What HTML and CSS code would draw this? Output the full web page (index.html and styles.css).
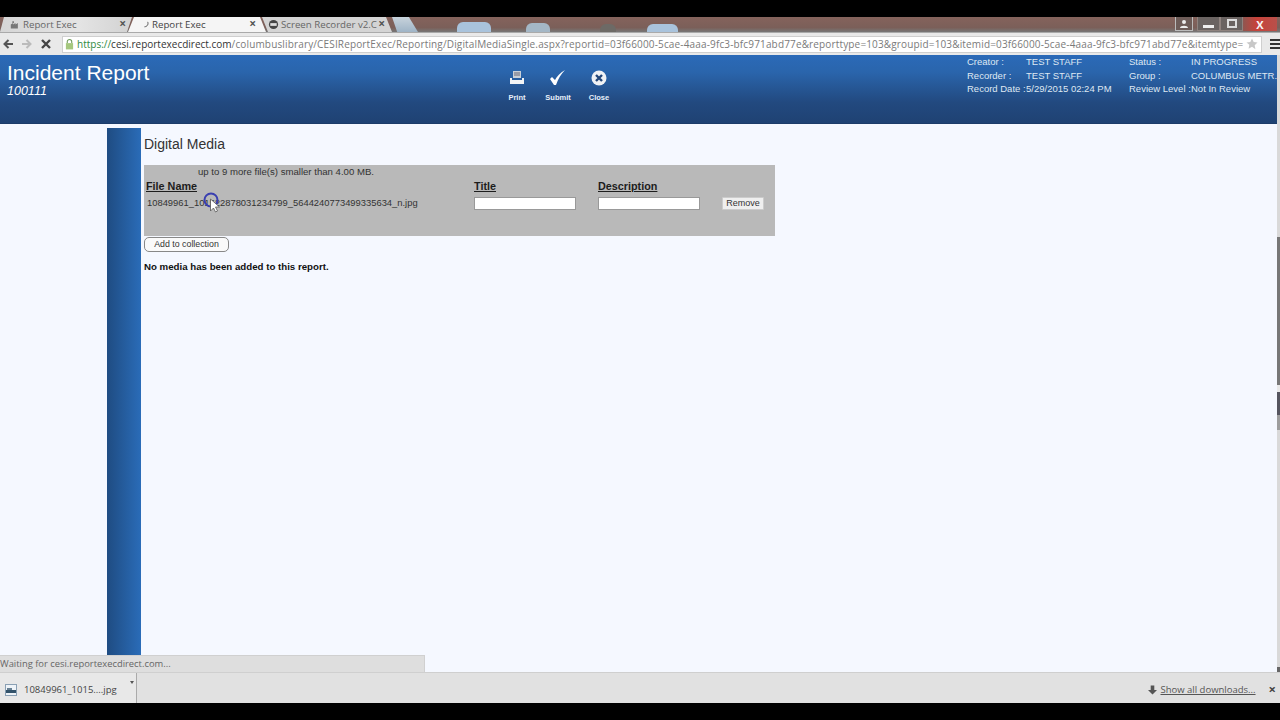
FILE: index.html
```html
<!DOCTYPE html>
<html lang="en">
<head>
<meta charset="utf-8">
<title>Report Exec</title>
<link rel="stylesheet" href="styles.css">
</head>
<body>
<div class="letterbox"></div>
<div class="tabstrip">
  <div class="tab tab-one">
    <svg class="tab-icon" viewBox="0 0 14 12"><path d="M1 11V6l3-2v2l3-2v2l3-2v7zM3 2h2v2H3z" fill="#777"/></svg>
    <span class="tab-title">Report Exec</span><span class="tab-x">×</span>
  </div>
  <div class="tab tab-two">
    <svg class="tab-icon spin" viewBox="0 0 12 12"><path d="M8 1.5C9.5 5 8 9.5 2.5 10" fill="none" stroke="#444" stroke-width="1.5"/></svg>
    <span class="tab-title">Report Exec</span><span class="tab-x">×</span>
  </div>
  <div class="tab tab-three">
    <svg class="tab-icon" viewBox="0 0 12 12"><circle cx="6" cy="6" r="5" fill="#444"/><rect x="2.5" y="4.5" width="7" height="3" fill="#ddd"/></svg>
    <span class="tab-title">Screen Recorder v2.C</span><span class="tab-x">×</span>
  </div>
  <div class="tab-stub"></div>
  <div class="desktop-blobs">
    <span class="blob blob-a"></span><span class="blob blob-b"></span><span class="blob blob-c"></span><span class="blob blob-d"></span>
  </div>
  <div class="window-controls">
    <span class="win-btn win-user"><svg viewBox="0 0 12 10" width="12" height="10"><path d="M6 1a2 2 0 1 1 0 4 2 2 0 0 1 0-4zM2 9c0-3 8-3 8 0z" fill="#eee"/></svg></span>
    <span class="win-btn win-min"><span class="min-bar"></span></span>
    <span class="win-btn win-max"><span class="max-box"></span></span>
    <span class="win-btn win-close">X</span>
  </div>
</div>
<div class="toolbar">
  <svg class="nav-icon" viewBox="0 0 12 12"><path d="M11 6H3M6.5 2L2.5 6l4 4" fill="none" stroke="#555" stroke-width="2"/></svg>
  <svg class="nav-icon" viewBox="0 0 12 12"><path d="M1 6h8M5.5 2l4 4-4 4" fill="none" stroke="#bbb" stroke-width="2"/></svg>
  <svg class="nav-icon" viewBox="0 0 12 12"><path d="M2 2l8 8M10 2l-8 8" fill="none" stroke="#444" stroke-width="2.4"/></svg>
  <div class="omnibox">
    <svg class="lock" viewBox="0 0 10 12"><path d="M2.5 5V3.500a2.500 2.500 0 0 1 5 0V5" fill="none" stroke="#6f9a5c" stroke-width="1.200"/><rect x="1" y="5" width="8" height="7" fill="#a5c77e"/></svg>
    <div class="url"><span class="url-scheme">https://</span><span class="url-host">cesi.reportexecdirect.com</span>/columbuslibrary/CESIReportExec/Reporting/DigitalMediaSingle.aspx?reportid=03f66000-5cae-4aaa-9fc3-bfc971abd77e&amp;reporttype=103&amp;groupid=103&amp;itemid=03f66000-5cae-4aaa-9fc3-bfc971abd77e&amp;itemtype=</div>
    <svg class="star" viewBox="0 0 12 12"><path d="M6 .5l1.700 3.600 3.800.5-2.800 2.700.7 3.900L6 8.800l-3.400 1.900.7-3.900L.5 4.600l3.800-.5z" fill="#c8c8c8"/></svg>
  </div>
  <div class="menu-bars"><span></span><span></span><span></span></div>
</div>
<div class="viewport">
  <div class="page">
    <header class="report-header">
      <div class="report-title">
        <h1>Incident Report</h1>
        <div class="report-number">100111</div>
      </div>
      <nav class="actions">
        <div class="action">
          <svg viewBox="0 0 16 16" width="16" height="16"><path d="M4 1h8v7H4z" fill="#c9d0d8"/><path d="M5 3h6M5 5h6" stroke="#667" stroke-width="1"/><path d="M1 8h2v2h10V8h2v6H1z" fill="#f2f4f6"/></svg>
          <span>Print</span>
        </div>
        <div class="action">
          <svg viewBox="0 0 18 16" width="18" height="16"><path d="M1 9l2-2 3 3c2-4 5-7 10-10-4 4-7 9-9 15H5z" fill="#fff"/></svg>
          <span>Submit</span>
        </div>
        <div class="action">
          <svg viewBox="0 0 16 16" width="16" height="16"><circle cx="8" cy="8" r="7.500" fill="#f0f2f5"/><path d="M5 5l6 6M11 5l-6 6" stroke="#24477a" stroke-width="2.400"/></svg>
          <span>Close</span>
        </div>
      </nav>
      <dl class="meta">
        <dt>Creator :</dt><dd>TEST STAFF</dd><dt>Status :</dt><dd>IN PROGRESS</dd>
        <dt>Recorder :</dt><dd>TEST STAFF</dd><dt>Group :</dt><dd>COLUMBUS METR.</dd>
        <dt>Record Date :</dt><dd>5/29/2015 02:24 PM</dd><dt>Review Level :</dt><dd>Not In Review</dd>
      </dl>
    </header>
    <div class="body-row">
      <aside class="side-bar"></aside>
      <main class="content">
        <h2>Digital Media</h2>
        <section class="upload-panel">
          <div class="upload-hint">up to 9 more file(s) smaller than 4.00 MB.</div>
          <div class="upload-grid">
            <div class="col-head">File Name</div>
            <div class="col-head">Title</div>
            <div class="col-head">Description</div>
            <div></div>
            <div class="file-name">10849961_101522878031234799_5644240773499335634_n.jpg</div>
            <input class="field" type="text" aria-label="Title">
            <input class="field" type="text" aria-label="Description">
            <button class="remove-btn" type="button">Remove</button>
          </div>
        </section>
        <button class="add-btn" type="button">Add to collection</button>
        <p class="empty-note">No media has been added to this report.</p>
      </main>
    </div>
    <div class="status-bubble">Waiting for cesi.reportexecdirect.com...</div>
    <svg class="busy-cursor" viewBox="0 0 20 24" width="20" height="24"><circle cx="8" cy="8" r="6.500" fill="none" stroke="#3a3fb0" stroke-width="2"/><path d="M7.500 7v12l3-3 2 4 2-1-2-4h4z" fill="#fff" stroke="#555" stroke-width=".8"/></svg>
  </div>
  <div class="edge-strip">
    <span class="edge-a"></span><span class="edge-b"></span><span class="edge-c"></span><span class="edge-d"></span><span class="edge-e"></span><span class="edge-f"></span>
  </div>
</div>
<footer class="download-bar">
  <div class="download-item">
    <svg class="file-icon" viewBox="0 0 12 12"><rect x=".5" y=".5" width="11" height="11" fill="#eef3f8" stroke="#8aa0b4"/><path d="M1 6h10v3H1z" fill="#33536b"/><path d="M2 4h5v2H2z" fill="#667f92"/></svg>
    <span class="download-name">10849961_1015....jpg</span>
    <span class="caret"></span>
  </div>
  <div class="download-right">
    <svg class="dl-arrow" viewBox="0 0 10 10"><path d="M3 0h4v5h3L5 10 0 5h3z" fill="#555"/></svg>
    <a class="show-all">Show all downloads...</a>
    <span class="bar-close">×</span>
  </div>
</footer>
<div class="letterbox bottom"></div>
</body>
</html>
```

FILE: styles.css
```css
* { box-sizing: border-box; }
html, body { margin: 0; height: 720px; overflow: hidden; }
body {
  display: flex;
  flex-direction: column;
  width: 1280px;
  background: #000;
  font-family: "Liberation Sans", Arial, sans-serif;
}
.letterbox { height: 17px; flex: none; background: #000; }
.letterbox.bottom { flex: 1; }

/* Tab strip */
.tabstrip {
  height: 15px;
  flex: none;
  display: flex;
  position: relative;
  background: linear-gradient(#85635c, #7b5f59 70%, #777);
  font-family: "Open Sans", "Noto Sans", sans-serif;
  font-size: 9.700px;
  overflow: hidden;
}
.tab {
  display: flex;
  align-items: center;
  height: 15px;
  flex: none;
  color: #666;
}
.tab-one {
  width: 132px;
  padding: 0 4px 1px 10px;
  background: linear-gradient(90deg, #d6d6d6, #e4e4e4 60%, #d2d2d2);
  clip-path: polygon(4px 0, 100% 0, calc(100% - 5px) 100%, 0 100%);
}
.tab-two {
  width: 138px;
  margin-left: -4px;
  padding: 0 8px 1px 15px;
  background: #f5f5f5;
  color: #444;
  clip-path: polygon(6px 0, calc(100% - 6px) 0, 100% 100%, 0 100%);
}
.tab-three {
  width: 130px;
  margin-left: -4px;
  padding: 0 5px 1px 6px;
  background: #d4d4d4;
  clip-path: polygon(0 0, calc(100% - 6px) 0, 100% 100%, 6px 100%);
}
.tab-stub {
  width: 26px;
  height: 15px;
  flex: none;
  background: linear-gradient(#c8d3dc, #9fb4c6);
  clip-path: polygon(0 0, 65% 0, 100% 100%, 20% 100%);
}
.tab-icon { width: 11px; height: 11px; flex: none; margin-right: 2px; }
.tab-icon.spin { margin-right: 2px; width: 7px; }
.tab-title { flex: 1; white-space: nowrap; overflow: hidden; }
.tab-x { font-weight: 700; font-size: 12px; line-height: 12px; color: #555; margin-right: 2px; }

.desktop-blobs { position: relative; flex: 1; }
.blob { position: absolute; top: 7px; height: 8px; background: #a9c3dc; border-radius: 6px 6px 0 0; }
.blob-a { left: 39px; width: 34px; top: 5px; height: 10px; }
.blob-b { left: 108px; width: 24px; top: 6px; height: 9px; background: #a4b7c6; }
.blob-c { left: 229px; width: 31px; }
.blob-d { left: 182px; width: 16px; background: #6d6a66; }

.window-controls {
  position: absolute;
  right: 3px;
  top: 0;
  height: 14px;
  display: flex;
  align-items: stretch;
}
.win-btn {
  display: flex;
  align-items: center;
  justify-content: center;
  width: 23px;
  background: #7b6a66;
  border: 1px solid #8e827e;
  border-top: 0;
}
.win-user { width: 18px; margin-right: 4px; background: #6d5c58; border-color: #bbb; }
.win-min { background: #6a6361; }
.win-max { background: #6a6361; }
.min-bar { width: 11px; height: 3px; background: #eee; margin-top: 6px; }
.max-box { width: 10px; height: 9px; border: 2px solid #ddd; }
.win-close {
  width: 34px;
  background: linear-gradient(90deg, #8f5650, #c8423a 40%, #b8504a);
  border: 0;
  color: #f5f5f5;
  font-weight: 700;
  font-size: 11px;
}

/* Address bar */
.toolbar {
  height: 23px;
  flex: none;
  display: flex;
  align-items: center;
  background: #e9e9e9;
  border-top: 1px solid #aaa;
  padding: 0 0 0 2px;
}
.nav-icon { width: 12px; height: 12px; flex: none; margin-right: 7px; }
.nav-icon:nth-child(3) { margin-right: 8px; }
.omnibox {
  width: 1200px;
  height: 17px;
  flex: none;
  display: flex;
  align-items: center;
  margin-left: 2px;
  background: #fff;
  border: 1px solid #cfcfcf;
  padding: 0 3px 0 2px;
  overflow: hidden;
}
.lock { width: 9px; height: 12px; flex: none; margin-right: 3px; }
.url {
  flex: 1;
  min-width: 0;
  overflow: hidden;
  white-space: nowrap;
  padding-bottom: 1px;
  font-family: "Open Sans", "Noto Sans", sans-serif;
  font-size: 10px;
  letter-spacing: .15px;
  color: #7a7a7a;
}
.url-scheme, .url-host { letter-spacing: 0; }
.url-scheme { color: #2f8a40; }
.url-host { color: #333; }
.star { width: 12px; height: 12px; flex: none; margin-left: 3px; }
.menu-bars { display: flex; flex-direction: column; gap: 2px; width: 10px; margin-left: 8px; flex: none; }
.menu-bars span { height: 2px; background: #333; }

/* Page */
.viewport { flex: none; height: 617px; display: flex; }
.page {
  position: relative;
  width: 1277px;
  flex: none;
  display: flex;
  flex-direction: column;
  background: #f5f8ff;
}
.report-header {
  height: 69px;
  flex: none;
  display: flex;
  color: #fff;
  background: linear-gradient(#2b6ab8, #2a65ac 25%, #22497f 70%, #1f4273);
  border-bottom: 1px solid #1c3c69;
}
.report-title { width: 507px; flex: none; padding: 6px 0 0 7px; }
.report-title h1 {
  margin: 0;
  font-size: 21px;
  line-height: 23px;
  font-weight: 400;
  white-space: nowrap;
}
.report-number { font-size: 12.500px; line-height: 14px; font-style: italic; }
.actions { display: flex; flex: none; width: 460px; padding-top: 15px; }
.action {
  display: flex;
  flex-direction: column;
  align-items: center;
  gap: 7px;
  width: 20px;
  margin-right: 21px;
  font-size: 7.500px;
  line-height: 9px;
  font-weight: 700;
  color: #e8f0fa;
}
.action svg { flex: none; }
.meta {
  margin: 0;
  display: grid;
  grid-template-columns: 59px 103px 62px 1fr;
  grid-auto-rows: 13.500px;
  font-size: 9.500px;
  line-height: 13px;
  white-space: nowrap;
  color: #dfe8f3;
  align-content: start;
  flex: 1;
  min-width: 0;
}
.meta dt, .meta dd { margin: 0; }

.body-row { flex: 1; min-height: 0; display: flex; padding: 4px 0 0 107px; }
.side-bar {
  width: 34px;
  flex: none;
  background: linear-gradient(90deg, #1f4c82, #2a6cb8);
}
.content { padding: 0 0 0 3px; flex: 1; min-width: 0; }
.content h2 {
  margin: 0;
  padding-top: 8px;
  height: 37px;
  font-size: 14px;
  line-height: 16px;
  font-weight: 400;
  color: #333;
}
.upload-panel {
  width: 631px;
  height: 71px;
  background: #b9b9b9;
  padding: 1px 0 0 2px;
  color: #222;
}
.upload-hint {
  padding-left: 52px;
  font-size: 9.600px;
  line-height: 12px;
  color: #333;
}
.upload-grid {
  display: grid;
  grid-template-columns: 328px 124px 124px 42px;
  grid-template-rows: 15px 18px;
  margin-top: 1px;
  align-items: center;
}
.col-head {
  font-size: 10.800px;
  line-height: 13px;
  font-weight: 700;
  text-decoration: underline;
  color: #1d1d1d;
}
.file-name { font-size: 9.400px; color: #333; white-space: nowrap; padding: 0 0 2px 1px; }
.field {
  width: 102px;
  height: 13px;
  padding: 0;
  background: #fff;
  border: 1px solid #999;
  border-radius: 0;
}
.remove-btn {
  width: 42px;
  height: 13px;
  padding: 0;
  font: 9px/11px "Liberation Sans", Arial, sans-serif;
  color: #333;
  background: #efefef;
  border: 1px solid #ccc;
  border-radius: 1px;
}
.add-btn {
  display: block;
  width: 85px;
  height: 15px;
  margin-top: 1px;
  padding: 0;
  font: 8.800px/13px "Liberation Sans", Arial, sans-serif;
  color: #333;
  background: #fafafa;
  border: 1px solid #888;
  border-radius: 5px;
}
.empty-note {
  margin: 9px 0 0;
  font-size: 9.700px;
  line-height: 12px;
  font-weight: 700;
  color: #111;
}
.status-bubble {
  position: absolute;
  left: 0;
  bottom: 0;
  width: 425px;
  height: 17px;
  font-family: "Open Sans", "Noto Sans", sans-serif;
  font-size: 9.400px;
  line-height: 15px;
  color: #666;
  background: #dedede;
  border-top: 1px solid #d0d0d0;
  border-right: 1px solid #d0d0d0;
}
.busy-cursor { position: absolute; left: 203px; top: 137px; }

.edge-strip { flex: 1; display: flex; flex-direction: column; background: #d9d9d9; }
.edge-strip span { display: block; }
.edge-a { height: 182px; }
.edge-b { height: 148px; background: #777; }
.edge-c { height: 7px; background: #e8e8e8; }
.edge-d { height: 23px; background: #55555f; }
.edge-e { height: 15px; background: #9d9d9d; }
.edge-f { flex: 1; background: linear-gradient(#d9d9d9 0 98%, #666 98%); }

/* Downloads */
.download-bar {
  height: 31px;
  flex: none;
  display: flex;
  align-items: center;
  background: #e1e1e1;
  border-top: 1px solid #cfcfcf;
  font-family: "Open Sans", "Noto Sans", sans-serif;
  color: #555;
}
.download-item {
  position: relative;
  width: 137px;
  height: 30px;
  flex: none;
  display: flex;
  align-items: center;
  padding: 3px 0 0 5px;
  border-right: 1px solid #aaa;
  background: #e8e8e8;
  font-size: 9.500px;
  color: #444;
}
.file-icon { width: 12px; height: 12px; flex: none; margin-right: 7px; }
.caret {
  position: absolute;
  right: 2px;
  top: 8px;
  border: 2px solid transparent;
  border-top: 3px solid #555;
}
.download-right {
  margin-left: auto;
  display: flex;
  align-items: center;
  padding: 3px 4px 0 0;
  font-size: 9.500px;
}
.dl-arrow { width: 9px; height: 10px; flex: none; margin-right: 4px; }
.show-all { text-decoration: underline; color: #555; margin-right: 1px; }
.bar-close { margin-left: 12px; font-weight: 700; font-size: 13px; line-height: 13px; color: #444; }
```
